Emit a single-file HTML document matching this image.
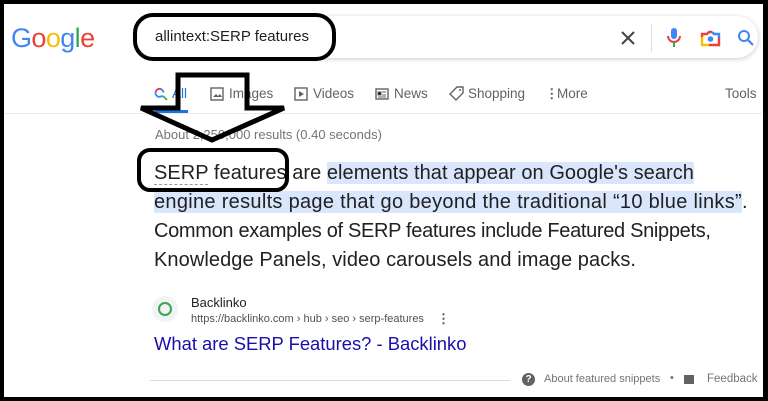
<!DOCTYPE html>
<html><head><meta charset="utf-8"><style>
body{margin:0;width:768px;height:401px;overflow:hidden;background:#fff;font-family:"Liberation Sans",Arial,sans-serif;position:relative}
.a{position:absolute;white-space:nowrap}
.nav{color:#5f6368;font-size:13.5px;top:86px}
.sn{font-size:20px;color:#202124;left:154px;letter-spacing:0.3px}
.hl{background:#d9e6fb}
</style></head><body>
<div class="a" style="left:0;top:0;width:768px;height:4px;background:#000"></div>
<div class="a" style="left:0;top:0;width:4px;height:401px;background:#000"></div>
<div class="a" style="right:0;top:0;width:5px;height:401px;background:#000"></div>
<div class="a" style="left:0;bottom:0;width:768px;height:4px;background:#000"></div>
<div class="a" style="left:11px;top:23px;font-size:27px;letter-spacing:-0.6px"><span style="color:#4285f4">G</span><span style="color:#ea4335">o</span><span style="color:#fbbc05">o</span><span style="color:#4285f4">g</span><span style="color:#34a853">l</span><span style="color:#ea4335">e</span></div>
<div class="a" style="left:136px;top:16px;width:622px;height:42px;border-radius:22px;box-shadow:0 1px 5px rgba(60,64,67,.28)"></div>
<div class="a" style="left:133px;top:13px;width:203px;height:48px;border:4px solid #000;border-radius:20px;box-sizing:border-box"></div>
<div class="a" style="left:155px;top:28px;font-size:15px;color:#202124">allintext:SERP features</div>
<svg class="a" style="left:618px;top:28px" width="20" height="20" viewBox="0 0 20 20"><path d="M4 4L16 16M16 4L4 16" stroke="#444" stroke-width="2"/></svg>
<div class="a" style="left:651px;top:24px;width:1px;height:28px;background:#ddd"></div>
<svg class="a" style="left:665px;top:26px" width="18" height="24" viewBox="0 0 18 24"><rect x="6" y="2" width="6" height="11" rx="3" fill="#4285f4"/><path d="M3 10a6 6 0 0 0 12 0" stroke="#ea4335" stroke-width="2" fill="none"/><path d="M9 16v5" stroke="#34a853" stroke-width="2"/></svg>
<svg class="a" style="left:700px;top:28px" width="21" height="20" viewBox="0 0 21 20"><path d="M2 9V6h5l2-2h3" stroke="#ea4335" stroke-width="2.4" fill="none"/><path d="M12 4l2 2h5v4" stroke="#4285f4" stroke-width="2.4" fill="none"/><path d="M2 9v8h7" stroke="#fbbc05" stroke-width="2.4" fill="none"/><path d="M9 17h10v-7" stroke="#ea4335" stroke-width="2.4" fill="none"/><circle cx="10.5" cy="11" r="2.8" fill="#4285f4"/></svg>
<svg class="a" style="left:737px;top:29px" width="18" height="18" viewBox="0 0 18 18"><circle cx="7" cy="7" r="5" stroke="#4285f4" stroke-width="2" fill="none"/><path d="M11 11l5 5" stroke="#4285f4" stroke-width="2.2"/></svg>
<svg class="a" style="left:154px;top:87px" width="14" height="14" viewBox="0 0 14 14"><path d="M9.5 5.5a4 4 0 1 0-1 3" stroke="#4285f4" stroke-width="1.8" fill="none"/><path d="M2 4a4 4 0 0 1 5-2" stroke="#ea4335" stroke-width="1.8" fill="none"/><path d="M9 9l4 4" stroke="#34a853" stroke-width="1.8"/></svg>
<div class="a nav" style="left:172px;color:#1a73e8">All</div>
<div class="a" style="left:155px;top:110px;width:33px;height:3px;background:#1a73e8"></div>
<svg class="a" style="left:210px;top:87px" width="14" height="14"><rect x="1" y="1" width="12" height="12" fill="none" stroke="#5f6368" stroke-width="1.4"/><path d="M3 10l3-3 2 2 2-2 2 3z" fill="#5f6368"/></svg>
<div class="a nav" style="left:229px">Images</div>
<svg class="a" style="left:294px;top:87px" width="14" height="14"><rect x="1" y="1" width="12" height="12" fill="none" stroke="#5f6368" stroke-width="1.4"/><path d="M5 4l5 3-5 3z" fill="#5f6368"/></svg>
<div class="a nav" style="left:313px">Videos</div>
<svg class="a" style="left:375px;top:87px" width="14" height="14"><rect x="1" y="2" width="12" height="10" fill="none" stroke="#5f6368" stroke-width="1.4"/><path d="M3 5h3v3H3zM7 5h4M7 8h4M3 10h8" stroke="#5f6368" stroke-width="1"/></svg>
<div class="a nav" style="left:394px">News</div>
<svg class="a" style="left:449px;top:86px" width="15" height="15"><path d="M8 1h6v6l-7 7-6-6z" fill="none" stroke="#5f6368" stroke-width="1.4"/><circle cx="11" cy="4" r="1" fill="#5f6368"/></svg>
<div class="a nav" style="left:468px">Shopping</div>
<div class="a nav" style="left:545px;font-weight:bold">⋮</div>
<div class="a nav" style="left:557px">More</div>
<div class="a nav" style="left:725px">Tools</div>
<div class="a" style="left:4px;top:113px;width:758px;height:1px;background:#e8eaed"></div>
<div class="a" style="left:155px;top:127px;font-size:13px;color:#70757a">About 2,250,000 results (0.40 seconds)</div>
<svg class="a" style="left:0;top:0" width="768" height="401"><polygon points="178,75 247,75 247,108 284,108 212,140 141,108 178,108" fill="none" stroke="#000" stroke-width="5" stroke-linejoin="miter"/></svg>
<div class="a sn" style="top:162px;letter-spacing:0.05px"><span style="border-bottom:1px dashed #999">SERP</span> features are <span class="hl">elements that appear on Google's search</span></div>
<div class="a sn" style="top:191px"><span class="hl">engine results page that go beyond the traditional “10 blue links”</span>.</div>
<div class="a sn" style="top:220px;letter-spacing:-0.32px">Common examples of SERP features include Featured Snippets,</div>
<div class="a sn" style="top:249px;letter-spacing:0.08px">Knowledge Panels, video carousels and image packs.</div>
<div class="a" style="left:137px;top:148px;width:152px;height:44px;border:4px solid #000;border-radius:13px;box-sizing:border-box"></div>
<div class="a" style="left:152px;top:296px;width:26px;height:26px;border-radius:50%;background:#f1f3f4"></div>
<div class="a" style="left:158px;top:302px;width:10px;height:10px;border-radius:50%;border:2.5px solid #34a853"></div>
<div class="a" style="left:191px;top:295px;font-size:13px;color:#202124">Backlinko</div>
<div class="a" style="left:191px;top:313px;font-size:11px;color:#4d5156">https://backlinko.com › hub › seo › serp-features</div>
<div class="a" style="left:437px;top:311px;font-size:13px;color:#4d5156;font-weight:bold">⋮</div>
<div class="a" style="left:154px;top:333px;font-size:18.4px;color:#1a0dab">What are SERP Features? - Backlinko</div>
<div class="a" style="left:150px;top:380px;width:360px;height:1px;background:#dadce0"></div>
<div class="a" style="left:522px;top:373px;width:13px;height:13px;border-radius:50%;background:#5f6368;color:#fff;font-size:10px;text-align:center;line-height:13px;font-weight:bold">?</div>
<div class="a" style="left:544px;top:373px;font-size:11px;color:#70757a">About featured snippets</div>
<div class="a" style="left:670px;top:372px;font-size:11px;color:#70757a">•</div>
<div class="a" style="left:684px;top:375px;width:10px;height:9px;background:#5f6368"></div>
<div class="a" style="left:707px;top:373px;font-size:11.5px;color:#70757a">Feedback</div>
</body></html>
